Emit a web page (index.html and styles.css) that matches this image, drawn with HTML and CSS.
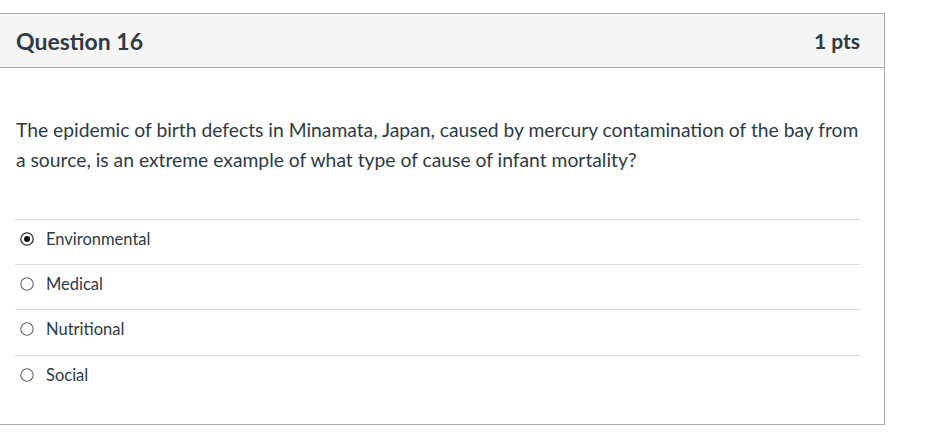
FILE: index.html
```html
<!DOCTYPE html>
<html>
<head>
<meta charset="utf-8">
<link rel="stylesheet" href="styles.css">
</head>
<body>
<div class="question">
  <div class="header">
    <h2 class="title">Question 16</h2>
    <span class="points">1 pts</span>
  </div>
  <div class="content">
    <p class="text">The epidemic of birth defects in Minamata, Japan, caused by mercury contamination of the bay from a source, is an extreme example of what type of cause of infant mortality?</p>
    <div class="answers">
      <div class="answer">
        <svg class="radio" width="14" height="14" viewBox="0 0 14 14"><circle cx="7" cy="7" r="6.2" fill="#fff" stroke="#333" stroke-width="1.3"/><circle cx="7" cy="7" r="3" fill="#111"/></svg>
        <span>Environmental</span>
      </div>
      <div class="answer">
        <svg class="radio" width="14" height="14" viewBox="0 0 14 14"><circle cx="7" cy="7" r="6.2" fill="#fff" stroke="#666" stroke-width="1.1"/></svg>
        <span>Medical</span>
      </div>
      <div class="answer">
        <svg class="radio" width="14" height="14" viewBox="0 0 14 14"><circle cx="7" cy="7" r="6.2" fill="#fff" stroke="#666" stroke-width="1.1"/></svg>
        <span>Nutritional</span>
      </div>
      <div class="answer last">
        <svg class="radio" width="14" height="14" viewBox="0 0 14 14"><circle cx="7" cy="7" r="6.2" fill="#fff" stroke="#666" stroke-width="1.1"/></svg>
        <span>Social</span>
      </div>
    </div>
  </div>
</div>
</body>
</html>
```
FILE: styles.css
```css
html, body {
  margin: 0;
  padding: 0;
  background: #fff;
}
body {
  font-family: Lato, "Liberation Sans", sans-serif;
  color: #2d3b45;
}
.question {
  margin-top: 13px;
  width: 884px;
  border-top: 1px solid #aaaaaa;
  border-right: 1px solid #aaaaaa;
  border-bottom: 1px solid #aaaaaa;
}
.header {
  height: 53px;
  background: #f5f5f5;
  border-bottom: 1px solid #aaaaaa;
  display: flex;
  align-items: center;
  justify-content: space-between;
  padding: 0 24px 0 16px;
}
.title {
  margin: 0;
  font-size: 23px;
  font-weight: 700;
}
.points {
  font-size: 21px;
  font-weight: 700;
  color: #2d3b45;
}
.content {
  padding: 47px 24px 24px 15px;
}
.text {
  margin: 0 0 44px 1px;
  font-size: 19.3px;
  line-height: 30px;
}
.answer {
  height: 38px;
  padding-bottom: 6px;
  border-top: 1px solid #dddddd;
  display: flex;
  align-items: center;
  font-size: 16.5px;
}
.answer.last {
  margin-top: 1px;
}
.radio {
  margin-left: 5px;
  margin-right: 12px;
  flex: none;
}
```
